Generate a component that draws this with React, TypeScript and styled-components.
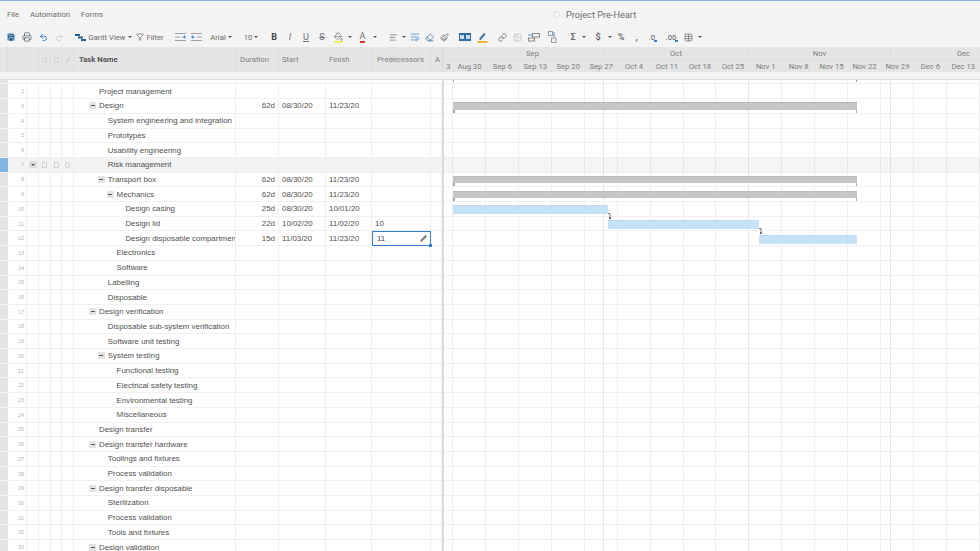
import React from 'react';
import styled, { createGlobalStyle } from 'styled-components';
import {
  AlignLeft, Eraser, Filter, Image, Link, Paintbrush, PaintBucket, Pencil, Printer,
  Redo2, Save, Table, Undo2, WrapText,
} from 'lucide-react';

const COLUMNS = '8px 19px 12px 12px 11px 12px 162px 43px 47px 46px 59px 11px';
const ROW_HEIGHT = 14.71;
const WEEK = 32.93;

const GlobalStyle = createGlobalStyle`
  html, body {
    margin: 0;
    padding: 0;
    height: 100%;
    overflow: hidden;
    background: #ffffff;
  }
`;

const Page = styled.div`
  width: 980px;
  height: 551px;
  display: flex;
  flex-direction: column;
  overflow: hidden;
  border-top: 1px solid #8ab6dc;
  box-sizing: border-box;
  font-family: Roboto, 'Liberation Sans', sans-serif;
  color: #666;
`;

const MenuBar = styled.div`
  height: 26px;
  flex: none;
  display: flex;
  align-items: center;
  padding-left: 7px;
  gap: 11px;
  background: #f4f4f4;
  font-size: 7.7px;
  color: #6c6c6c;
`;

const Title = styled.div`
  display: flex;
  align-items: center;
  gap: 6px;
  margin-left: 439px;
  font-size: 9.2px;
  color: #6f6f6f;
`;

const TitleDot = styled.span`
  width: 5px;
  height: 5px;
  border-radius: 50%;
  border: 1px solid #dcdcdc;
`;

const Toolbar = styled.div`
  height: 20px;
  flex: none;
  display: flex;
  align-items: center;
  padding-left: 3px;
  background: #f4f4f4;
  font-size: 7.7px;
  color: #6c6c6c;
`;

const Tool = styled.div<{ $w?: number; $ml?: number; $color?: string; $size?: number; $weight?: number; $italic?: boolean; $line?: boolean; $strike?: boolean }>`
  width: ${(p) => p.$w ?? 16}px;
  margin-left: ${(p) => p.$ml ?? 0}px;
  height: 14px;
  flex: none;
  display: flex;
  align-items: center;
  justify-content: center;
  gap: 2px;
  white-space: nowrap;
  font-size: ${(p) => p.$size ?? 7.7}px;
  color: ${(p) => p.$color ?? '#6c6c6c'};
  font-weight: ${(p) => p.$weight ?? 400};
  font-style: ${(p) => (p.$italic ? 'italic' : 'normal')};
  text-decoration: ${(p) => (p.$line ? 'underline' : p.$strike ? 'line-through' : 'none')};
`;

const Caret = styled.span`
  flex: none;
  width: 0;
  height: 0;
  border-left: 2px solid transparent;
  border-right: 2px solid transparent;
  border-top: 2.5px solid #555;
`;

const FontColor = styled.span`
  border-bottom: 2px solid #d9352c;
  line-height: 9px;
`;

const Decimal = styled.span`
  position: relative;

  &::after {
    content: '';
    position: absolute;
    right: -2px;
    bottom: 0;
    width: 3px;
    height: 2px;
    background: #2f80c8;
  }
`;

const HeaderBar = styled.div`
  height: 25px;
  flex: none;
  display: flex;
  background: #e5e5e5;
`;

const HeaderGrid = styled.div`
  width: 442px;
  flex: none;
  display: grid;
  grid-template-columns: ${COLUMNS};
  overflow: hidden;
`;

const HeaderCell = styled.div<{ $strong?: boolean; $faint?: boolean; $pad?: number }>`
  display: flex;
  align-items: center;
  overflow: hidden;
  padding-left: ${(p) => p.$pad ?? 0}px;
  justify-content: ${(p) => (p.$pad !== undefined ? 'flex-start' : 'center')};
  border-right: 1px solid #dedede;
  font-size: 7.7px;
  white-space: nowrap;
  font-weight: ${(p) => (p.$strong ? 700 : 400)};
  font-style: ${(p) => (p.$faint ? 'italic' : 'normal')};
  color: ${(p) => (p.$strong ? '#555' : p.$faint ? '#aaa' : '#7c7c7c')};
`;

const Splitter = styled.div`
  width: 2px;
  flex: none;
  background: #dcdcdc;
`;

const Timescale = styled.div`
  flex: 1;
  display: flex;
  flex-direction: column;
  overflow: hidden;
  font-size: 7.7px;
  color: #7c7c7c;
`;

const Months = styled.div`
  height: 12px;
  display: flex;
  border-bottom: 1px solid #dcdcdc;
`;

const Month = styled.div<{ $w: number; $lead?: number; $indent?: number }>`
  width: ${(p) => p.$w}px;
  flex: none;
  display: flex;
  align-items: center;
  justify-content: ${(p) => (p.$indent !== undefined ? 'flex-start' : 'center')};
  padding-left: ${(p) => p.$lead ?? p.$indent ?? 0}px;
  border-right: 1px solid #dcdcdc;
  box-sizing: border-box;
`;

const Weeks = styled.div`
  flex: 1;
  display: flex;
  align-items: center;
`;

const Week = styled.div<{ $w: number }>`
  width: ${(p) => p.$w}px;
  flex: none;
  text-align: center;
  white-space: nowrap;
  overflow: hidden;
`;

const Band = styled.div`
  height: 8px;
  flex: none;
  background: #f4f4f4;
  border-bottom: 1px solid #dedede;
  box-sizing: border-box;
`;

const Body = styled.div`
  flex: 1;
  display: flex;
  overflow: hidden;
`;

const TaskTable = styled.div`
  width: 442px;
  flex: none;
  display: flex;
  flex-direction: column;
`;

const RowTop = styled.div`
  height: 4.4px;
  flex: none;
  display: grid;
  grid-template-columns: ${COLUMNS};
  border-bottom: 1px solid #f0f0f0;
  box-sizing: border-box;
`;

const Row = styled.div<{ $active?: boolean }>`
  height: ${ROW_HEIGHT}px;
  flex: none;
  display: grid;
  grid-template-columns: ${COLUMNS};
  box-sizing: border-box;
  border-bottom: 1px solid #f0f0f0;
  background: ${(p) => (p.$active ? '#f3f3f3' : '#ffffff')};
  font-family: 'Liberation Sans', Arial, sans-serif;
  font-size: 7.9px;
  color: #505050;
`;

const Gutter = styled.div<{ $active?: boolean }>`
  background: ${(p) => (p.$active ? '#7fb6e4' : '#e4e4e4')};
  border-bottom: 1px solid #f5f5f5;
  margin-bottom: -1px;
`;

const RowNum = styled.div`
  display: flex;
  align-items: center;
  justify-content: flex-end;
  padding-right: 2px;
  font-size: 5.5px;
  color: #b5b5b5;
  border-right: 1px solid #f0f0f0;
`;

const Cell = styled.div<{ $align?: string }>`
  display: flex;
  align-items: center;
  justify-content: ${(p) => p.$align ?? 'flex-start'};
  padding: 0 3px;
  overflow: hidden;
  white-space: nowrap;
  border-right: 1px solid #f0f0f0;
`;

const IconCell = styled.div`
  display: flex;
  align-items: center;
  justify-content: center;
  border-right: 1px solid #f0f0f0;
  color: #c8c8c8;
`;

const RowMenu = styled.span`
  width: 8px;
  height: 7px;
  display: flex;
  align-items: center;
  justify-content: center;
  background: #dedede;
  border-radius: 1px;
`;

const Ghost = styled.span<{ $round?: boolean }>`
  width: 5px;
  height: 6px;
  border: 1px solid #d2d2d2;
  border-radius: ${(p) => (p.$round ? 2 : 0)}px;
  box-sizing: border-box;
`;

const NameCell = styled.div<{ $level: number; $hasToggle: boolean }>`
  display: flex;
  align-items: center;
  overflow: hidden;
  white-space: nowrap;
  border-right: 1px solid #f0f0f0;
  padding-left: ${(p) => 25 + p.$level * 8.8 - (p.$hasToggle ? 10 : 0)}px;
`;

const Toggle = styled.span`
  width: 7px;
  height: 7px;
  margin-right: 3px;
  flex: none;
  display: flex;
  align-items: center;
  justify-content: center;
  background: #e2e2e2;
  border-radius: 1px;

  &::before {
    content: '';
    width: 4px;
    height: 1px;
    background: #555;
  }
`;

const EditCell = styled.div`
  position: relative;
  display: flex;
  align-items: center;
  justify-content: space-between;
  padding: 0 3px 0 4px;
  margin-bottom: -1px;
  border: 1.5px solid #2f7fd4;
  background: #ffffff;
  color: #444;
  z-index: 1;

  &::after {
    content: '';
    position: absolute;
    right: -2px;
    bottom: -2px;
    width: 3px;
    height: 3px;
    background: #2f7fd4;
  }
`;

const Chart = styled.div`
  flex: 1;
  display: flex;
  flex-direction: column;
  overflow: hidden;
  background-image:
    linear-gradient(to right, #e6e6e6 1px, transparent 1px),
    linear-gradient(to right, #e6e6e6 1px, transparent 1px),
    linear-gradient(to right, #e6e6e6 1px, transparent 1px),
    repeating-linear-gradient(to right, #f0f0f0 0, #f0f0f0 1px, transparent 1px, transparent ${WEEK}px);
  background-size: 1px 100%, 1px 100%, 1px 100%, auto;
  background-position: 159px 0, 304px 0, 446px 0, 8px 0;
  background-repeat: no-repeat, no-repeat, no-repeat, repeat;
`;

const ChartTop = styled.div`
  height: 4.4px;
  flex: none;
  position: relative;
  border-bottom: 1px solid #f0f0f0;
  box-sizing: border-box;
`;

const Tick = styled.span<{ $left: number }>`
  position: absolute;
  top: 0;
  left: ${(p) => p.$left}px;
  width: 1px;
  height: 2px;
  background: #999;
`;

const ChartRow = styled.div<{ $active?: boolean }>`
  height: ${ROW_HEIGHT}px;
  flex: none;
  display: flex;
  box-sizing: border-box;
  border-bottom: 1px solid #f0f0f0;
  background: ${(p) => (p.$active ? 'rgba(0, 0, 0, 0.04)' : 'transparent')};
`;

const Bar = styled.div<{ $left: number; $w: number; $summary?: boolean }>`
  position: relative;
  margin-left: ${(p) => p.$left}px;
  margin-top: 3.3px;
  width: ${(p) => p.$w}px;
  height: ${(p) => (p.$summary ? 7.5 : 9)}px;
  background: ${(p) => (p.$summary ? '#c6c6c6' : '#c6e2f6')};
  border-top: 1px solid ${(p) => (p.$summary ? '#bcbcbc' : '#bddbf0')};
  box-sizing: border-box;

  ${(p) =>
    p.$summary &&
    `
    &::before, &::after {
      content: '';
      position: absolute;
      top: 100%;
      height: 3px;
      width: 1.5px;
      background: #a8a8a8;
    }
    &::before { left: 0; }
    &::after { right: 0; }
  `}
`;

const Connector = styled.svg`
  position: absolute;
  left: 100%;
  top: 7px;
  overflow: visible;
`;

type Task = { name: string; level: number; toggle?: boolean; dur?: string; start?: string; finish?: string; pred?: string };

const tasks: Task[] = [
  { name: 'Project management', level: 0 },
  { name: 'Design', level: 0, toggle: true, dur: '62d', start: '08/30/20', finish: '11/23/20' },
  { name: 'System engineering and integration', level: 1 },
  { name: 'Prototypes', level: 1 },
  { name: 'Usability engineering', level: 1 },
  { name: 'Risk management', level: 1 },
  { name: 'Transport box', level: 1, toggle: true, dur: '62d', start: '08/30/20', finish: '11/23/20' },
  { name: 'Mechanics', level: 2, toggle: true, dur: '62d', start: '08/30/20', finish: '11/23/20' },
  { name: 'Design casing', level: 3, dur: '25d', start: '08/30/20', finish: '10/01/20' },
  { name: 'Design lid', level: 3, dur: '22d', start: '10/02/20', finish: '11/02/20', pred: '10' },
  { name: 'Design disposable compartment', level: 3, dur: '15d', start: '11/03/20', finish: '11/23/20', pred: '11' },
  { name: 'Electronics', level: 2 },
  { name: 'Software', level: 2 },
  { name: 'Labelling', level: 1 },
  { name: 'Disposable', level: 1 },
  { name: 'Design verification', level: 0, toggle: true },
  { name: 'Disposable sub-system verification', level: 1 },
  { name: 'Software unit testing', level: 1 },
  { name: 'System testing', level: 1, toggle: true },
  { name: 'Functional testing', level: 2 },
  { name: 'Electrical safety testing', level: 2 },
  { name: 'Environmental testing', level: 2 },
  { name: 'Miscellaneous', level: 2 },
  { name: 'Design transfer', level: 0 },
  { name: 'Design transfer hardware', level: 0, toggle: true },
  { name: 'Toolings and fixtures', level: 1 },
  { name: 'Process validation', level: 1 },
  { name: 'Design transfer disposable', level: 0, toggle: true },
  { name: 'Sterilization', level: 1 },
  { name: 'Process validation', level: 1 },
  { name: 'Tools and fixtures', level: 1 },
  { name: 'Design validation', level: 0, toggle: true },
];

const weeks = ['Aug 30', 'Sep 6', 'Sep 13', 'Sep 20', 'Sep 27', 'Oct 4', 'Oct 11', 'Oct 18', 'Oct 25', 'Nov 1', 'Nov 8', 'Nov 15', 'Nov 22', 'Nov 29', 'Dec 6', 'Dec 13'];

const bars: Record<number, { left: number; w: number; summary?: boolean; link?: boolean }> = {
  3: { left: 9, w: 404, summary: true },
  8: { left: 9, w: 404, summary: true },
  9: { left: 9, w: 404, summary: true },
  10: { left: 9, w: 155, link: true },
  11: { left: 164, w: 151, link: true },
  12: { left: 315, w: 98 },
};

const GanttIcon = () => (
  <svg width="11" height="8" viewBox="0 0 11 8">
    <path d="M0 1h5v2H0zM3 3.5h5v2H3zM6 6h5v2H6z" fill="#1f5f96" />
  </svg>
);

const OutdentIcon = ({ flip }: { flip?: boolean }) => (
  <svg width="11" height="8" viewBox="0 0 11 8" style={flip ? { transform: 'scaleX(-1)' } : undefined}>
    <path d="M0 .5h11M0 7.5h11M0 4h5" stroke="#a0a0a0" strokeWidth="1" />
    <path d="M7 4h4M9.5 2.5v3" stroke="#3a8fd8" strokeWidth="1" />
  </svg>
);

const CardIcon = () => (
  <svg width="12" height="8" viewBox="0 0 12 8">
    <rect width="12" height="8" fill="#2f6ea5" />
    <rect x="1" y="2" width="4" height="4" fill="#c8dcec" />
    <rect x="7" y="2" width="4" height="4" fill="#c8dcec" />
  </svg>
);

const HighlightIcon = () => (
  <svg width="11" height="11" viewBox="0 0 11 11">
    <path d="M2 7l5-6 1.500 1.200-5 6z" fill="#2f6ea5" />
    <rect x="0.500" y="9" width="10" height="2" fill="#f0b429" />
  </svg>
);

const AssignIcon = () => (
  <svg width="12" height="10" viewBox="0 0 12 10">
    <rect x="4.500" y="1.500" width="7" height="3.500" fill="none" stroke="#8a8a8a" />
    <rect x="0.500" y="6" width="6" height="3" fill="none" stroke="#8a8a8a" />
    <path d="M0 3h4" stroke="#3a8fd8" />
  </svg>
);

const SplitIcon = () => (
  <svg width="9" height="12" viewBox="0 0 9 12">
    <rect x="0.500" y="0.500" width="4" height="4" fill="none" stroke="#999" />
    <rect x="3.500" y="7" width="4.500" height="4.500" fill="none" stroke="#999" />
    <path d="M6 1v5" stroke="#3a8fd8" />
  </svg>
);

const App: React.FC = () => {
  return (
    <>
      <GlobalStyle />
      <Page>
        <MenuBar>
          <span>File</span>
          <span>Automation</span>
          <span>Forms</span>
          <Title>
            <TitleDot />
            Project Pre-Heart
          </Title>
        </MenuBar>

        <Toolbar>
          <Tool><Save size={10} color="#f4f4f4" fill="#1f5f96" strokeWidth={1.5} /></Tool>
          <Tool><Printer size={10} color="#5f6f7d" /></Tool>
          <Tool><Undo2 size={9} color="#2f80c8" strokeWidth={2.5} /></Tool>
          <Tool><Redo2 size={9} color="#c4c4c4" /></Tool>
          <Tool $w={59} $ml={7}>
            <GanttIcon />
            <span>Gantt View</span>
            <Caret />
          </Tool>
          <Tool $w={30} $ml={2}>
            <Filter size={8} color="#666" />
            <span>Filter</span>
          </Tool>
          <Tool $ml={7}><OutdentIcon /></Tool>
          <Tool><OutdentIcon flip /></Tool>
          <Tool $w={26} $ml={4}>Arial <Caret /></Tool>
          <Tool $w={18} $ml={8}>10 <Caret /></Tool>
          <Tool $ml={6} $size={9} $weight={700} $color="#444">B</Tool>
          <Tool $size={9} $italic>I</Tool>
          <Tool $size={9} $line>U</Tool>
          <Tool $size={9} $strike>S</Tool>
          <Tool><PaintBucket size={9} color="#777" style={{ borderBottom: '2px solid #f3ec6a' }} /></Tool>
          <Tool $w={8}><Caret /></Tool>
          <Tool $w={17} $size={9}><FontColor>A</FontColor></Tool>
          <Tool $w={8}><Caret /></Tool>
          <Tool $w={16} $ml={6}><AlignLeft size={9} color="#777" /></Tool>
          <Tool $w={6}><Caret /></Tool>
          <Tool $w={15}><WrapText size={10} color="#4b8fc9" /></Tool>
          <Tool $w={14}><Eraser size={9} color="#2f6ea5" /></Tool>
          <Tool><Paintbrush size={9} color="#666" /></Tool>
          <Tool $ml={5}><CardIcon /></Tool>
          <Tool $w={18}><HighlightIcon /></Tool>
          <Tool $w={16} $ml={3}><Link size={9} color="#666" /></Tool>
          <Tool $w={15}><Image size={9} color="#c0c0c0" /></Tool>
          <Tool $w={18}><AssignIcon /></Tool>
          <Tool $w={18}><SplitIcon /></Tool>
          <Tool $w={12} $ml={6} $size={9} $weight={700}>Σ</Tool>
          <Tool $w={10}><Caret /></Tool>
          <Tool $w={16} $ml={1} $size={9} $weight={700}>$</Tool>
          <Tool $w={7}><Caret /></Tool>
          <Tool $w={14} $ml={1} $size={9} $weight={700}>%</Tool>
          <Tool $w={17} $size={9} $weight={700}>,</Tool>
          <Tool $w={14} $color="#555"><Decimal>.0</Decimal></Tool>
          <Tool $w={18} $ml={3} $color="#555"><Decimal>.00</Decimal></Tool>
          <Tool><Table size={9} color="#777" /></Tool>
          <Tool $w={8}><Caret /></Tool>
        </Toolbar>

        <HeaderBar>
          <HeaderGrid>
            <HeaderCell />
            <HeaderCell />
            <HeaderCell />
            <HeaderCell><Ghost $round /></HeaderCell>
            <HeaderCell><Ghost /></HeaderCell>
            <HeaderCell $faint>/</HeaderCell>
            <HeaderCell $strong $pad={5}>Task Name</HeaderCell>
            <HeaderCell $pad={4}>Duration</HeaderCell>
            <HeaderCell $pad={3}>Start</HeaderCell>
            <HeaderCell $pad={3}>Finish</HeaderCell>
            <HeaderCell $pad={5}>Predecessors</HeaderCell>
            <HeaderCell $pad={4}>A</HeaderCell>
          </HeaderGrid>
          <Splitter />
          <Timescale>
            <Months>
              <Month $w={160} $lead={18}>Sep</Month>
              <Month $w={145}>Oct</Month>
              <Month $w={142}>Nov</Month>
              <Month $w={143} $indent={66}>Dec</Month>
            </Months>
            <Weeks>
              <Week $w={9}>3</Week>
              {weeks.map((w) => (
                <Week key={w} $w={WEEK}>{w}</Week>
              ))}
            </Weeks>
          </Timescale>
        </HeaderBar>

        <Band />

        <Body>
          <TaskTable>
            <RowTop>
              <Gutter />
            </RowTop>
            {tasks.map((t, i) => {
              const num = i + 2;
              const active = num === 7;
              return (
                <Row key={num} $active={active}>
                  <Gutter $active={active} />
                  <RowNum>{num}</RowNum>
                  <IconCell>
                    {active && <RowMenu><Caret /></RowMenu>}
                  </IconCell>
                  <IconCell>{active && <Ghost />}</IconCell>
                  <IconCell>{active && <Ghost />}</IconCell>
                  <IconCell>{active && <Ghost $round />}</IconCell>
                  <NameCell $level={t.level} $hasToggle={!!t.toggle}>
                    {t.toggle && <Toggle />}
                    {t.name}
                  </NameCell>
                  <Cell $align="flex-end">{t.dur}</Cell>
                  <Cell>{t.start}</Cell>
                  <Cell>{t.finish}</Cell>
                  {num === 12 ? (
                    <EditCell>
                      {t.pred}
                      <Pencil size={7} color="#666" fill="#888" />
                    </EditCell>
                  ) : (
                    <Cell>{t.pred}</Cell>
                  )}
                  <Cell />
                </Row>
              );
            })}
          </TaskTable>
          <Splitter />
          <Chart>
            <ChartTop>
              <Tick $left={9} />
              <Tick $left={412} />
            </ChartTop>
            {tasks.map((_, i) => {
              const num = i + 2;
              const bar = bars[num];
              return (
                <ChartRow key={num} $active={num === 7}>
                  {bar && (
                    <Bar $left={bar.left} $w={bar.w} $summary={bar.summary}>
                      {bar.link && (
                        <Connector width="4" height="7" viewBox="0 0 4 7">
                          <path d="M0 .5h2v5" fill="none" stroke="#555" strokeWidth="0.8" />
                          <path d="M.7 4.500h2.600L2 6.500z" fill="#333" />
                        </Connector>
                      )}
                    </Bar>
                  )}
                </ChartRow>
              );
            })}
          </Chart>
        </Body>
      </Page>
    </>
  );
};

export default App;
